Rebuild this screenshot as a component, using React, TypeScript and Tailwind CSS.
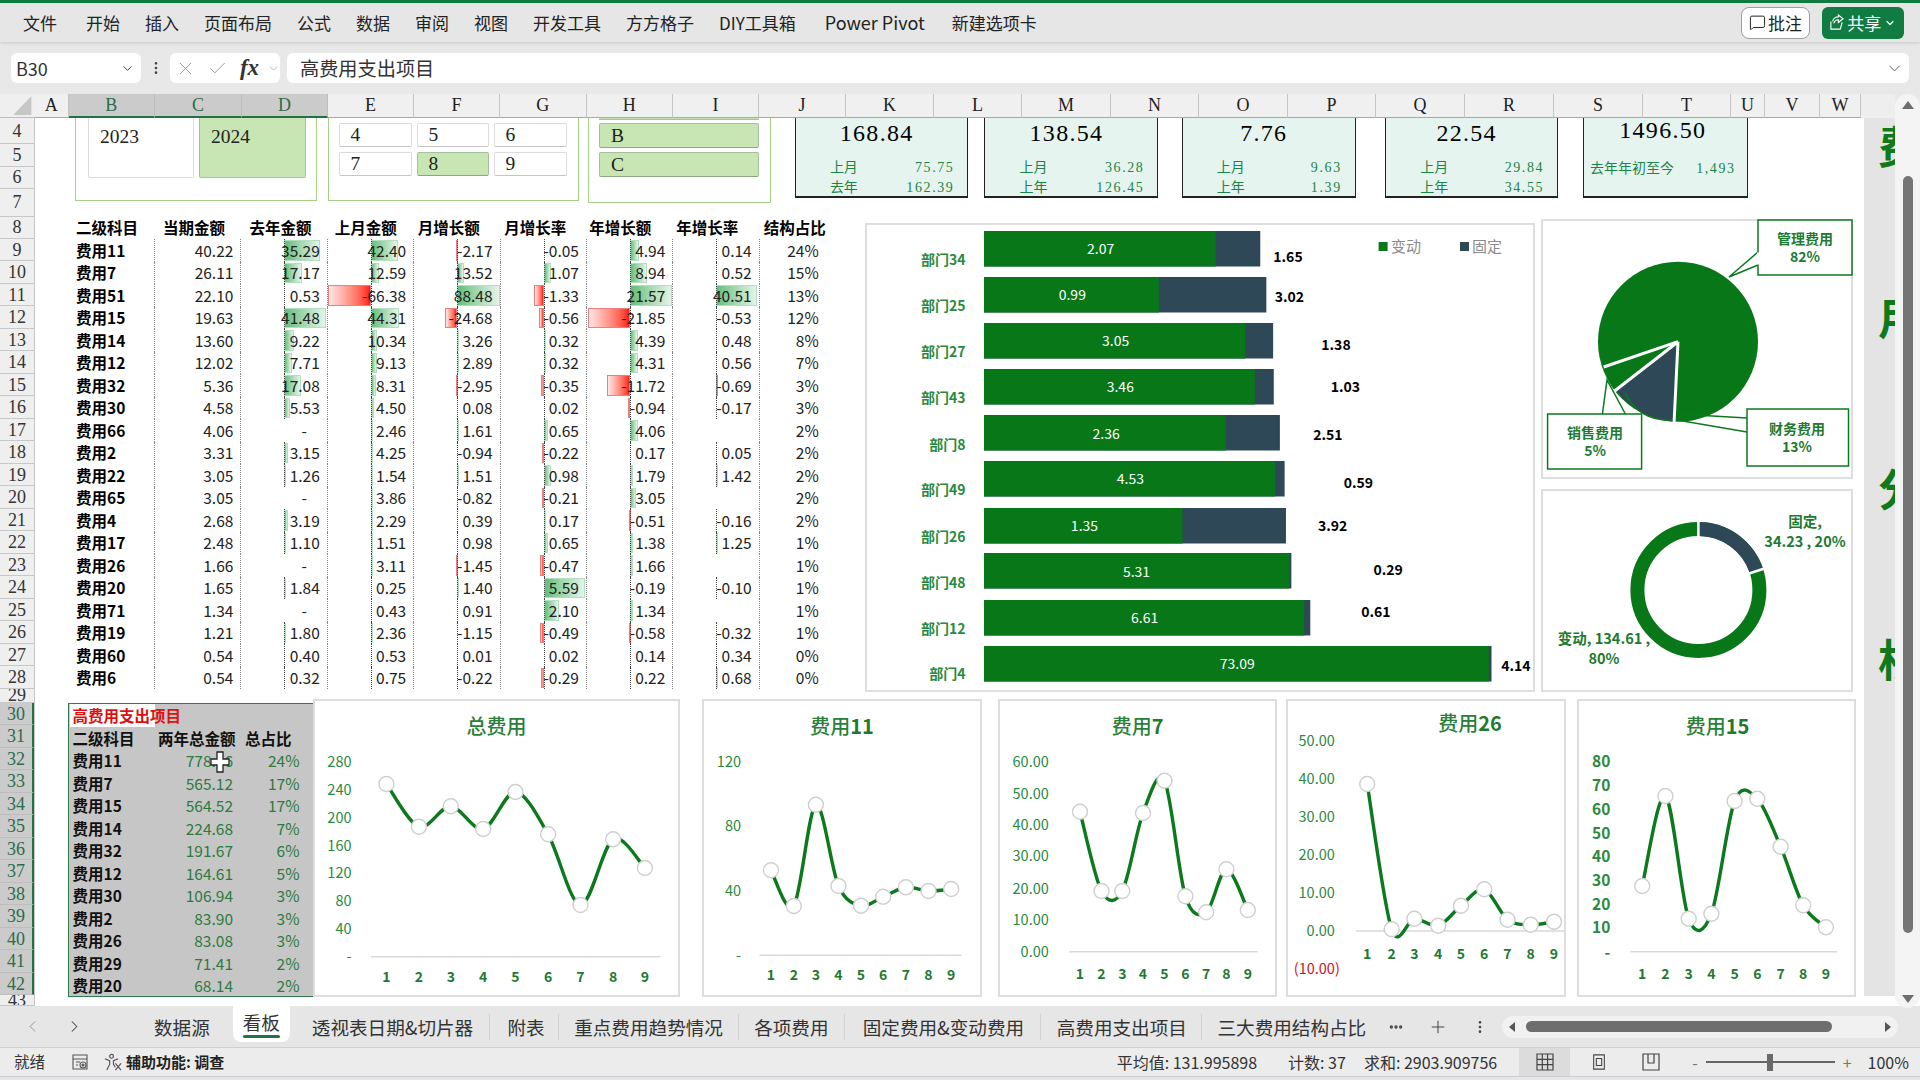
import React from "react";
import { ChevronDown, ChevronLeft, ChevronRight, X, Check, Plus, MoreVertical, MoreHorizontal, MessageSquare } from "lucide-react";

const SANS = "font-['Noto_Sans_CJK_SC','Noto_Sans',sans-serif]";
const SERIF = "font-['Liberation_Serif','Noto_Sans_CJK_SC',serif]";

const COLS: { l: string; c: string; sel?: boolean }[] = [
  { l: "A", c: "w-[33.6px]" },
  { l: "B", c: "w-[86.4px]", sel: true },
  { l: "C", c: "w-[87px]", sel: true },
  { l: "D", c: "w-[86px]", sel: true },
  { l: "E", c: "w-[86px]" },
  { l: "F", c: "w-[86px]" },
  { l: "G", c: "w-[86.6px]" },
  { l: "H", c: "w-[86.4px]" },
  { l: "I", c: "w-[86px]" },
  { l: "J", c: "w-[87px]" },
  { l: "K", c: "w-[88px]" },
  { l: "L", c: "w-[88px]" },
  { l: "M", c: "w-[89px]" },
  { l: "N", c: "w-[88px]" },
  { l: "O", c: "w-[89px]" },
  { l: "P", c: "w-[88px]" },
  { l: "Q", c: "w-[89px]" },
  { l: "R", c: "w-[89px]" },
  { l: "S", c: "w-[89px]" },
  { l: "T", c: "w-[88px]" },
  { l: "U", c: "w-[34px]" },
  { l: "V", c: "w-[55px]" },
  { l: "W", c: "w-[41px]" },
];

const ROWS: { n: string; c: string; sel?: boolean }[] = [
  { n: "4", c: "h-[26px]" },
  { n: "5", c: "h-[22.7px]" },
  { n: "6", c: "h-[22.3px]" },
  { n: "7", c: "h-[27.7px]" },
  { n: "8", c: "h-[22.3px]" },
  ...Array.from({ length: 20 }, (_, i) => ({ n: String(i + 9), c: "h-[22.5px]" })),
  { n: "29", c: "h-[14px]" },
  ...Array.from({ length: 13 }, (_, i) => ({ n: String(i + 30), c: "h-[22.5px]", sel: true })),
  { n: "43", c: "h-[10.5px]" },
];

type Row = [string, string, string, string, string, string, string, string, string];
const DATA: Row[] = [
  ["费用11", "40.22", "35.29", "42.40", "-2.17", "-0.05", "4.94", "0.14", "24%"],
  ["费用7", "26.11", "17.17", "12.59", "13.52", "1.07", "8.94", "0.52", "15%"],
  ["费用51", "22.10", "0.53", "-66.38", "88.48", "-1.33", "21.57", "40.51", "13%"],
  ["费用15", "19.63", "41.48", "44.31", "-24.68", "-0.56", "-21.85", "-0.53", "12%"],
  ["费用14", "13.60", "9.22", "10.34", "3.26", "0.32", "4.39", "0.48", "8%"],
  ["费用12", "12.02", "7.71", "9.13", "2.89", "0.32", "4.31", "0.56", "7%"],
  ["费用32", "5.36", "17.08", "8.31", "-2.95", "-0.35", "-11.72", "-0.69", "3%"],
  ["费用30", "4.58", "5.53", "4.50", "0.08", "0.02", "-0.94", "-0.17", "3%"],
  ["费用66", "4.06", "-", "2.46", "1.61", "0.65", "4.06", "", "2%"],
  ["费用2", "3.31", "3.15", "4.25", "-0.94", "-0.22", "0.17", "0.05", "2%"],
  ["费用22", "3.05", "1.26", "1.54", "1.51", "0.98", "1.79", "1.42", "2%"],
  ["费用65", "3.05", "-", "3.86", "-0.82", "-0.21", "3.05", "", "2%"],
  ["费用4", "2.68", "3.19", "2.29", "0.39", "0.17", "-0.51", "-0.16", "2%"],
  ["费用17", "2.48", "1.10", "1.51", "0.98", "0.65", "1.38", "1.25", "1%"],
  ["费用26", "1.66", "-", "3.11", "-1.45", "-0.47", "1.66", "", "1%"],
  ["费用20", "1.65", "1.84", "0.25", "1.40", "5.59", "-0.19", "-0.10", "1%"],
  ["费用71", "1.34", "-", "0.43", "0.91", "2.10", "1.34", "", "1%"],
  ["费用19", "1.21", "1.80", "2.36", "-1.15", "-0.49", "-0.58", "-0.32", "1%"],
  ["费用60", "0.54", "0.40", "0.53", "0.01", "0.02", "0.14", "0.34", "0%"],
  ["费用6", "0.54", "0.32", "0.75", "-0.22", "-0.29", "0.22", "0.68", "0%"],
];

const SCALE = [0, 0, 1.0, 0.64, 0.48, 7.4, 1.93, 1.0];

function DataCell({ v, scale }: { v: string; scale: number }) {
  const n = parseFloat(v);
  const has = !isNaN(n);
  const w = has ? Math.abs(n) * scale : 0;
  return (
    <div className="relative w-[86.4px] h-full border-r border-dotted border-[#888] flex items-center justify-end pr-[7px]">
      {has && w >= 0.6 && n > 0 && (
        <div
          className="absolute top-px bottom-px bg-linear-to-r from-[#63be7b] to-[#e4f4e9] border border-[#b3dfc0]"
          style={{ left: 43, width: w }}
        />
      )}
      {has && w >= 0.6 && n < 0 && (
        <div
          className="absolute top-px bottom-px bg-linear-to-l from-[#ff1010] to-[#ffe6e6] border border-[#e8807f]"
          style={{ left: 43 - w, width: w }}
        />
      )}
      {scale > 0 && v !== "" && v !== "-" && <div className="absolute left-[43px] top-0 bottom-0 border-l border-dotted border-[#444]" />}
      <span className={v === "-" ? "relative pr-[13px]" : "relative"}>{v}</span>
    </div>
  );
}

function MainTable() {
  const heads: [string, string][] = [
    ["二级科目", "pl-[7.5px]"],
    ["当期金额", "pl-[8px]"],
    ["去年金额", "pl-[8px]"],
    ["上月金额", "pl-[7px]"],
    ["月增长额", "pl-[3.6px]"],
    ["月增长率", "pl-[3.8px]"],
    ["年增长额", "pl-[2.4px]"],
    ["年增长率", "pl-[3px]"],
    ["结构占比", "pl-[4px]"],
  ];
  return (
    <div className="w-[777.6px] text-[15.5px] leading-none text-[#222]">
      <div className="flex h-[22px] items-center font-bold text-black">
        {heads.map(([h, c]) => (
          <div key={h} className={`w-[86.4px] whitespace-nowrap ${c}`}>{h}</div>
        ))}
      </div>
      {DATA.map((r) => (
        <div key={r[0]} className="flex h-[22.5px]">
          <div className="w-[86.4px] pl-[7.5px] font-bold text-black flex items-center border-r border-dotted border-[#888]">{r[0]}</div>
          <DataCell v={r[1]} scale={0} />
          {r.slice(2, 8).map((v, i) => (
            <DataCell key={i} v={v} scale={SCALE[i + 2]} />
          ))}
          <div className="w-[59px] flex items-center justify-end">{r[8]}</div>
        </div>
      ))}
    </div>
  );
}

function Slicers() {
  const btn = "rounded-[2px] border border-[#dcdcdc] border-b-[#c4c4c4] bg-white flex items-center pl-[11px] text-[#222]";
  const on = "rounded-[2px] border border-[#a9bda0] border-b-[#8da487] bg-[#c8e5b4] flex items-center pl-[11px] text-[#222]";
  return (
    <div className={`flex items-start ml-[40px] text-[19.5px] leading-none ${SERIF}`}>
      <div className="w-[241.6px] h-[83px] border-x border-b border-[#a5d08a] flex gap-[5px] pl-[12px]">
        <div className="w-[106px] h-[60px] rounded-b-[2px] border-x border-b border-[#dcdcdc] bg-white pl-[11px] pt-[9px] text-[#222]">2023</div>
        <div className="w-[106.6px] h-[60px] rounded-b-[2px] border-x border-b border-[#a9bda0] bg-[#c8e5b4] pl-[11px] pt-[9px] text-[#222]">2024</div>
      </div>
      <div className="ml-[11px] w-[251px] h-[83px] border-x border-b border-[#a5d08a] pl-[10px] pt-[4.7px] grid grid-cols-[73px_72px_73px] grid-rows-[24px_24px] gap-[5px]">
        <div className={btn}>4</div>
        <div className={btn}>5</div>
        <div className={btn}>6</div>
        <div className={btn}>7</div>
        <div className={on}>8</div>
        <div className={btn}>9</div>
      </div>
      <div className="ml-[9.3px] w-[183.6px] h-[85px] border-x border-b border-[#a5d08a] pl-[10px] flex flex-col">
        <div className="w-[160.5px] h-[2px] bg-[#c8e5b4] border-b border-[#a9bda0]" />
        <div className={`${on} w-[160.5px] h-[24.4px] mt-[3.3px]`}>B</div>
        <div className={`${on} w-[160.5px] h-[24.4px] mt-[4.6px]`}>C</div>
      </div>
    </div>
  );
}

function KpiCard({ cls, value, a, av, b, bv }: { cls: string; value: string; a: string; av: string; b: string; bv: string }) {
  return (
    <div className={`${cls} h-[80px] border-x border-b-2 border-[#222] bg-[#e6f4ef] ${SERIF}`}>
      <div className="h-[30px] pr-[10px] text-center text-[24px] leading-[30px] tracking-[1.3px] text-black">{value}</div>
      <div className="mt-[10px] pl-[34px] pr-[13px] text-[14px] leading-[19.7px] text-[#1b8447]">
        <div className="flex justify-between"><span>{a}</span><span className="tracking-[1.6px]">{av}</span></div>
        <div className="flex justify-between"><span>{b}</span><span className="tracking-[1.6px]">{bv}</span></div>
      </div>
    </div>
  );
}

function TopBand() {
  return (
    <div className="flex items-start h-[85px] shrink-0">
      <Slicers />
      <KpiCard cls="ml-[23.4px] w-[173.6px]" value="168.84" a="上月" av="75.75" b="去年" bv="162.39" />
      <KpiCard cls="ml-[16px] w-[174px]" value="138.54" a="上月" av="36.28" b="上年" bv="126.45" />
      <KpiCard cls="ml-[23.3px] w-[174px]" value="7.76" a="上月" av="9.63" b="上年" bv="1.39" />
      <KpiCard cls="ml-[29.4px] w-[173px]" value="22.54" a="上月" av="29.84" b="上年" bv="34.55" />
      <div className={`ml-[24.8px] w-[164.7px] h-[80px] border-x border-b-2 border-[#222] bg-[#e6f4ef] ${SERIF}`}>
        <div className="h-[24px] pr-[5px] text-center text-[24px] leading-[24px] tracking-[1.3px] text-black">1496.50</div>
        <div className="mt-[17px] pl-[6px] pr-[11px] flex justify-between text-[14px] leading-[20px] text-[#1b8447]">
          <span>去年年初至今</span><span className="tracking-[1.6px]">1,493</span>
        </div>
      </div>
    </div>
  );
}

const GREEN = "#087718";
const NAVY = "#2f4858";
const X4 = (v: number) => 860 + v / 1.479;

function BarChart() {
  const bars = [
    ["部门34", 231, 526, 592, "2.07", 356, 249, "1.65", 633, 257, 260],
    ["部门25", 277, 442, 601, "0.99", 314, 295, "3.02", 635, 297, 306],
    ["部门27", 323, 570, 611, "3.05", 378, 341, "1.38", 704, 345, 352],
    ["部门43", 369, 584, 612, "3.46", 385, 387, "1.03", 718, 387, 398],
    ["部门8", 415, 541, 621, "2.36", 364, 434, "2.51", 692, 435, 445],
    ["部门49", 461, 614, 628, "4.53", 400, 479, "0.59", 737, 483, 490],
    ["部门26", 508, 477, 630, "1.35", 332, 526, "3.92", 699, 526, 537],
    ["部门48", 553, 635, 638, "5.31", 409, 572, "0.29", 781, 570, 583],
    ["部门12", 600, 657, 666, "6.61", 421, 618, "0.61", 763, 612, 629],
    ["部门4", 646, 930, 934, "73.09", 558, 664, "4.14", 970, 666, 674],
  ] as const;
  return (
    <div className="ml-[18.8px] mt-[6px] w-[670px] h-[469px] ring-2 ring-inset ring-[#dedede] shrink-0">
      <svg viewBox="865 223 670 469" className="block w-full h-full">
        {bars.map((b) => (
          <g key={b[0]}>
            <rect x={984} y={b[1]} width={X4(b[3]) - 984} height={35.5} fill={NAVY} />
            <rect x={984} y={b[1]} width={X4(b[2]) - 984} height={35.5} fill={GREEN} />
            <text x={X4(b[5])} y={b[6]} dy="0.36em" textAnchor="middle" fontSize={14} fill="#fff">{b[4]}</text>
            <text x={X4(b[8])} y={b[9]} dy="0.36em" textAnchor="middle" fontSize={14} fontWeight={700} fill="#000">{b[7]}</text>
            <text x={965.5} y={b[10]} dy="0.36em" textAnchor="end" fontSize={14} fontWeight={700} fill="#2a8a3e">{b[0]}</text>
          </g>
        ))}
        <rect x={1378.6} y={242} width={9} height={9} fill={GREEN} />
        <text x={1391} y={246.5} dy="0.36em" fontSize={15} fill="#8a8a8a">变动</text>
        <rect x={1460} y={242} width={9} height={9} fill={NAVY} />
        <text x={1472} y={246.5} dy="0.36em" fontSize={15} fill="#8a8a8a">固定</text>
      </svg>
    </div>
  );
}

function PieChart() {
  const t = { fontSize: 14, fontWeight: 700, fill: "#1d7a30", textAnchor: "middle" as const, dy: "0.36em" };
  const G2 = "#0a7a1f";
  return (
    <div className="w-[312px] h-[260px] ring-2 ring-inset ring-[#dedede]">
      <svg viewBox="1541 219 312 260" className="block w-full h-full">
        <circle cx={1678} cy={341.7} r={80} fill={GREEN} />
        <path d="M1678 341.7 L1616 390 A79 79 0 0 0 1675 421.7 Z" fill={NAVY} />
        <path d="M1678 341.7 L1603.7 367 M1678 341.7 L1612 393 M1678 341.7 L1674 424" stroke="#fff" strokeWidth={3} fill="none" />
        <path d="M1625 393 Q1640 422 1672 420" stroke={G2} strokeWidth={1.5} fill="none" />
        <path d="M1758 252 L1729 277 L1758 265" stroke={G2} strokeWidth={1.5} fill="none" />
        <rect x={1758} y={220} width={94} height={55} fill="#fff" stroke={G2} strokeWidth={1.5} />
        <path d="M1758 252.5 L1758 264.5" stroke="#fff" strokeWidth={2} />
        <text x={1805} y={239} {...t}>管理费用</text>
        <text x={1805} y={257} {...t}>82%</text>
        <path d="M1747 418 L1678 414 M1747 432 L1677 420" stroke={G2} strokeWidth={1.5} fill="none" />
        <rect x={1747} y={409} width={101.5} height={57} fill="#fff" stroke={G2} strokeWidth={1.5} />
        <text x={1797} y={429} {...t}>财务费用</text>
        <text x={1797} y={447} {...t}>13%</text>
        <path d="M1602.4 414 L1607 380 L1625.4 414" stroke={G2} strokeWidth={1.5} fill="none" />
        <rect x={1547.6} y={414} width={94} height={55} fill="#fff" stroke={G2} strokeWidth={1.5} />
        <text x={1595} y={433} {...t}>销售费用</text>
        <text x={1595} y={451} {...t}>5%</text>
      </svg>
    </div>
  );
}

function DonutChart() {
  const t = { fontSize: 14.5, fontWeight: 700, fill: "#1d7a30", textAnchor: "middle" as const, dy: "0.36em" };
  const cx = 1698.4, cy = 590, r = 61;
  const a = (72 * Math.PI) / 180;
  const ex = cx + r * Math.sin(a), ey = cy - r * Math.cos(a);
  const sx = cx + 76 * Math.sin(a), sy = cy - 76 * Math.cos(a);
  const ix = cx + 50 * Math.sin(a), iy = cy - 50 * Math.cos(a);
  return (
    <div className="mt-[10px] w-[312px] h-[203px] ring-2 ring-inset ring-[#dedede]">
      <svg viewBox="1541 489 312 203" className="block w-full h-full">
        <circle cx={cx} cy={cy} r={r} fill="none" stroke={GREEN} strokeWidth={14} />
        <path d={`M${cx} ${cy - r} A${r} ${r} 0 0 1 ${ex} ${ey}`} fill="none" stroke={NAVY} strokeWidth={14} />
        <path d={`M${ix} ${iy} L${sx} ${sy} M${cx} ${cy - 76} L${cx} ${cy - 50}`} stroke="#fff" strokeWidth={2.5} />
        <text x={1805} y={522} {...t}>固定,</text>
        <text x={1805} y={542} {...t}>34.23 , 20%</text>
        <text x={1604} y={639} {...t}>变动, 134.61 ,</text>
        <text x={1604} y={659} {...t}>80%</text>
      </svg>
    </div>
  );
}

const SIDE: [string, string, string][] = [
  ["费用11", "778.56", "24%"],
  ["费用7", "565.12", "17%"],
  ["费用15", "564.52", "17%"],
  ["费用14", "224.68", "7%"],
  ["费用32", "191.67", "6%"],
  ["费用12", "164.61", "5%"],
  ["费用30", "106.94", "3%"],
  ["费用2", "83.90", "3%"],
  ["费用26", "83.08", "3%"],
  ["费用29", "71.41", "2%"],
  ["费用20", "68.14", "2%"],
];

function SideTable() {
  return (
    <div className="relative ml-[33px] mt-[4px] w-[244.5px] h-[294px] bg-[#c6c6c6] border border-r-0 border-[#2f7d4f] text-[15.5px] leading-none shrink-0">
      <div className="h-[23px] flex items-center">
        <div className="ml-[1px] w-[85px] h-full bg-white pl-[2.5px] flex items-center font-bold text-[#e01010] whitespace-nowrap">高费用支出项目</div>
      </div>
      <div className="h-[22.5px] flex items-center pl-[3.5px] font-bold text-[#111] whitespace-nowrap">
        <span className="w-[85.5px]">二级科目</span>
        <span className="w-[87px]">两年总金额</span>
        <span>总占比</span>
      </div>
      {SIDE.map((r) => (
        <div key={r[0]} className="h-[22.5px] flex items-center pl-[3.5px]">
          <span className="w-[62px] font-bold text-[#111]">{r[0]}</span>
          <span className="w-[98.5px] text-right text-[#2d7a3f]">{r[1]}</span>
          <span className="w-[66.5px] text-right text-[#2d7a3f]">{r[2]}</span>
        </div>
      ))}
      <svg viewBox="0 0 20 22" className="absolute left-[141px] top-[47px] w-[20px] h-[22px]">
        <path d="M7 1H13V8H19V14H13V21H7V14H1V8H7Z" fill="#fff" stroke="#222" strokeWidth={1.3} />
      </svg>
    </div>
  );
}

function smooth(p: number[][]) {
  let d = `M${p[0][0]} ${p[0][1]}`;
  for (let i = 0; i < p.length - 1; i++) {
    const p0 = p[i - 1] || p[i];
    const p1 = p[i];
    const p2 = p[i + 1];
    const p3 = p[i + 2] || p2;
    const k = 0.16;
    d += ` C${p1[0] + (p2[0] - p0[0]) * k} ${p1[1] + (p2[1] - p0[1]) * k} ${p2[0] - (p3[0] - p1[0]) * k} ${p2[1] - (p3[1] - p1[1]) * k} ${p2[0]} ${p2[1]}`;
  }
  return d;
}

type ChartProps = {
  cls: string;
  box: [number, number, number, number];
  title: string;
  num?: string;
  tx: number;
  ty: number;
  pts: number[][];
  axis: [number, number, number];
  ylabels: [string, number][];
  yr: number;
  xy: number;
  bold?: boolean;
};

function LineChart({ cls, box, title, num, tx, ty, pts, axis, ylabels, yr, xy, bold }: ChartProps) {
  return (
    <div className={`${cls} h-[298px] ring-2 ring-inset ring-[#dedede] shrink-0`}>
      <svg viewBox={box.join(" ")} className="block w-full h-full">
        <text x={tx} y={ty} dy="0.36em" textAnchor="middle" fontSize={20} fontWeight={500} fill="#2a7f3a">
          {title}
          {num && <tspan fontWeight={700} fill="#1d7a30">{num}</tspan>}
        </text>
        {ylabels.map(([t, y]) => (
          <text key={t} x={t === "(10.00)" ? yr + 5 : yr} y={y} dy="0.36em" textAnchor="end" fontSize={bold ? 15.5 : 14.5} fontWeight={bold ? 700 : 400} fill={t === "(10.00)" ? "#d0101c" : "#2a8a3e"}>{t}</text>
        ))}
        <line x1={axis[0]} x2={axis[1]} y1={axis[2]} y2={axis[2]} stroke="#d9d9d9" strokeWidth={1.6} />
        <path d={smooth(pts)} fill="none" stroke="#0b7a1c" strokeWidth={3.4} />
        {pts.map((p, i) => (
          <g key={i}>
            <circle cx={p[0]} cy={p[1]} r={7.5} fill="#fff" stroke="#cfcfcf" strokeWidth={1.4} />
            <text x={p[0]} y={xy} dy="0.36em" textAnchor="middle" fontSize={14} fontWeight={700} fill="#1d7a30">{i + 1}</text>
          </g>
        ))}
      </svg>
    </div>
  );
}

function Charts() {
  return (
    <>
      <LineChart
        cls="w-[367.5px]" box={[312.5, 699, 367.5, 298]} title="总费用" tx={496} ty={727}
        pts={[[386, 784], [418.4, 826.7], [450.3, 806.3], [482.7, 829], [515, 792], [547.6, 834.3], [580, 905], [612.6, 839.3], [644.4, 868]]}
        axis={[370.7, 660, 956.7]}
        ylabels={[["280", 762], ["240", 790], ["200", 818], ["160", 846], ["120", 873], ["80", 901], ["40", 929], ["-", 957]]}
        yr={351} xy={976.7}
      />
      <LineChart
        cls="ml-[22px] w-[280px]" box={[702, 699, 280, 298]} title="费用" num="11" tx={842} ty={727}
        pts={[[771, 870.3], [793.8, 906], [815.9, 804.7], [838.5, 886], [861, 905.7], [883.2, 896.7], [905.9, 887.3], [928.5, 891], [951.2, 889]]}
        axis={[759.5, 961.6, 955.3]}
        ylabels={[["120", 762], ["80", 826], ["40", 890.7], ["-", 956]]}
        yr={741} xy={975}
      />
      <LineChart
        cls="ml-[16px] w-[279px]" box={[998, 699, 279, 298]} title="费用" num="7" tx={1137.6} ty={727}
        pts={[[1080, 811.7], [1101.5, 891], [1122.3, 891], [1143, 813], [1164.5, 780.7], [1185.4, 896.3], [1206.2, 912.3], [1226.4, 869.3], [1247.8, 910]]}
        axis={[1069, 1257.6, 951.7]}
        ylabels={[["60.00", 761.7], ["50.00", 793.3], ["40.00", 824.3], ["30.00", 856], ["20.00", 888.3], ["10.00", 919.7], ["0.00", 951.7]]}
        yr={1048.8} xy={974}
      />
      <LineChart
        cls="ml-[9px] w-[280px]" box={[1286, 699, 280, 298]} title="费用" num="26" tx={1470} ty={724}
        pts={[[1367.2, 784], [1391.7, 929.3], [1414.4, 918.7], [1438.2, 925.7], [1461, 905.7], [1484.2, 889.3], [1507.5, 919.7], [1530.7, 924.7], [1554, 921.7]]}
        axis={[1356, 1565, 931]}
        ylabels={[["50.00", 740.7], ["40.00", 778.3], ["30.00", 816.7], ["20.00", 854.7], ["10.00", 892.7], ["0.00", 930.7], ["(10.00)", 969]]}
        yr={1334.8} xy={954}
      />
      <LineChart
        cls="ml-[11px] w-[279px]" box={[1577, 699, 279, 298]} title="费用" num="15" tx={1717.5} ty={727}
        pts={[[1642.2, 886], [1665.4, 796], [1688.7, 918.7], [1711.4, 913.7], [1734.6, 801], [1757.3, 798.7], [1780.6, 846.7], [1803.2, 905.3], [1825.9, 927.3]]}
        axis={[1630.5, 1837, 951.7]}
        ylabels={[["80", 761.7], ["70", 785.7], ["60", 809], ["50", 833.3], ["40", 856.7], ["30", 880.7], ["20", 904.3], ["10", 927.3], ["-", 952.7]]}
        yr={1610.3} xy={974} bold
      />
    </>
  );
}

function Ribbon() {
  const tabs = ["开始", "插入", "页面布局", "公式", "数据", "审阅", "视图", "开发工具", "方方格子", "DIY工具箱"];
  return (
    <div className="h-[39px] bg-[#e6e6e6] flex items-center pl-[23px] pr-[16px] text-[17px] text-[#222] shadow-[0_1px_3px_rgba(0,0,0,0.15)] relative shrink-0">
      <span className="mr-[29px]">文件</span>
      <div className="flex gap-[25px]">
        {tabs.map((t) => <span key={t}>{t}</span>)}
      </div>
      <span className="ml-[29px] mr-[27px] text-[18px]">Power Pivot</span>
      <span>新建选项卡</span>
      <div className="ml-auto flex items-center gap-[11.5px]">
        <div className="w-[69px] h-[32px] rounded-lg border border-[#9e9e9e] bg-white flex items-center justify-center gap-[2px]">
          <MessageSquare size={17} strokeWidth={1.4} />
          <span>批注</span>
        </div>
        <div className="w-[82.5px] h-[32px] rounded-md bg-[#107c41] text-white flex items-center justify-center gap-[3px]">
          <svg viewBox="0 0 16 18" className="w-[15px] h-[17px]" fill="none" stroke="#fff" strokeWidth={1.2}>
            <path d="M2 8V16H12L14 9M4 8C4 5 7 3 10 3V1L15 5L10 9V6C8 6 6 7 5 10" />
          </svg>
          <span>共享</span>
          <ChevronDown size={12} strokeWidth={2.4} />
        </div>
      </div>
    </div>
  );
}

function FormulaBar() {
  return (
    <div className="h-[52px] bg-[#e8e8e8] flex items-center pl-[11px] pr-[11px] text-[#444] shrink-0">
      <div className="w-[130px] h-[30px] rounded-md bg-white flex items-center pl-[5px] pr-[6px] justify-between text-[18px] text-[#333]">
        <span>B30</span>
        <ChevronDown size={15} strokeWidth={1.5} />
      </div>
      <div className="w-[29px] flex justify-center"><MoreVertical size={16} strokeWidth={2} /></div>
      <div className="w-[110px] h-[30px] rounded-md bg-white flex items-center pl-[5px] text-[#999]">
        <X size={21} strokeWidth={1.1} />
        <Check size={21} strokeWidth={1.1} className="ml-[11px]" />
        <span className={`ml-[12px] italic font-bold text-[23px] text-[#333] ${SERIF}`}>fx</span>
        <ChevronDown size={13} strokeWidth={1.3} className="ml-[8px]" />
      </div>
      <div className="ml-[7px] flex-1 h-[30px] rounded-md bg-white flex items-center pl-[13px] pr-[5px] justify-between text-[19.2px] text-[#333]">
        <span>高费用支出项目</span>
        <ChevronDown size={19} strokeWidth={1.2} className="text-[#555]" />
      </div>
    </div>
  );
}

function ColumnHeaders() {
  return (
    <div className={`h-[24px] bg-[#e8e8e8] flex shrink-0 ${SERIF}`}>
      <div className="w-[35px] h-full bg-[#efefef] border-b border-[#bdbdbd] relative">
        <svg viewBox="0 0 35 24" className="absolute inset-0 w-full h-full"><path d="M32 2V22H13Z" fill="#c6c6c6" /></svg>
      </div>
      {COLS.map((c) => (
        <div
          key={c.l}
          className={c.sel
            ? `${c.c} h-full bg-[#cbcbcb] border-r border-[#bdbdbd] border-b-2 border-b-[#217346] text-[#2d6b49] flex items-center justify-center text-[18px]`
            : `${c.c} h-full bg-[#f0f0f0] border-r border-[#c4c4c4] border-b border-b-[#a8a8a8] text-[#222] flex items-center justify-center text-[18px]`}
        >
          {c.l}
        </div>
      ))}
      <div className="w-[34px] h-full bg-[#eeeeee] border-b border-[#eeeeee]" />
    </div>
  );
}

function RowHeaders() {
  return (
    <div className={`w-[35px] h-[888px] bg-[#efefef] overflow-hidden shrink-0 border-r border-[#c4c4c4] text-[#333] ${SERIF}`}>
      {ROWS.map((r) => (
        <div
          key={r.n}
          className={r.sel
            ? `${r.c} flex items-center justify-center text-[18px] leading-none bg-[#cbcbcb] text-[#2d6b49] border-b border-[#bdbdbd] border-r-2 border-r-[#217346]`
            : `${r.c} flex items-center justify-center text-[18px] leading-none border-b border-[#c8c8c8] overflow-hidden`}
        >
          {r.n}
        </div>
      ))}
    </div>
  );
}

function VScroll() {
  return (
    <div className="absolute right-0 top-[94px] w-[25px] h-[914px] bg-[#f4f4f4] rounded-[13px] flex flex-col items-center pt-[7px] pb-[5px]">
      <div className="w-0 h-0 border-x-[6px] border-x-transparent border-b-[8px] border-b-[#6e6e6e]" />
      <div className="mt-[67px] w-[10px] h-[757px] rounded-full bg-[#757575]" />
      <div className="mt-auto w-0 h-0 border-x-[6px] border-x-transparent border-t-[8px] border-t-[#6e6e6e]" />
    </div>
  );
}

function SideStrip() {
  return (
    <div className="w-[31px] h-[888px] bg-white shrink-0">
      <div className="h-[878px] bg-[#e4e4e4] overflow-hidden pl-[14px] pt-[5px] flex flex-col gap-[127px] text-[44px] leading-[44px] font-bold text-[#0f7a1c]">
        <span>费</span>
        <span>用</span>
        <span>分</span>
        <span>析</span>
      </div>
    </div>
  );
}

function Sheet() {
  return (
    <div className="flex h-[888px] shrink-0 bg-white">
      <RowHeaders />
      <div className="w-[1829px] h-[888px] overflow-hidden flex flex-col shrink-0">
        <TopBand />
        <div className="flex items-start mt-[14px] h-[475px] shrink-0">
          <div className="ml-[33.6px] shrink-0"><MainTable /></div>
          <BarChart />
          <div className="ml-[6px] mt-[2px] w-[312px] shrink-0">
            <PieChart />
            <DonutChart />
          </div>
        </div>
        <div className="flex items-start mt-[7px] h-[298px] shrink-0">
          <SideTable />
          <Charts />
        </div>
      </div>
      <SideStrip />
    </div>
  );
}

function SheetTabs() {
  const tabs: [string, string][] = [
    ["透视表日期&切片器", "ml-[22px] pr-[15.4px]"],
    ["附表", "pl-[17.8px] pr-[13.7px]"],
    ["重点费用趋势情况", "pl-[14.9px] pr-[15.1px]"],
    ["各项费用", "pl-[15.1px] pr-[15.4px]"],
    ["固定费用&变动费用", "pl-[17.8px] pr-[15.8px]"],
    ["高费用支出项目", "pl-[15.8px] pr-[14.2px]"],
    ["三大费用结构占比", "pl-[15.4px] pr-[15px]"],
  ];
  return (
    <div className="h-[42px] bg-[#e6e6e6] flex items-center text-[18.6px] text-[#333] border-b border-[#cfcfcf] shrink-0">
      <ChevronLeft size={19} strokeWidth={1.1} className="ml-[23px] text-[#888]" />
      <ChevronRight size={19} strokeWidth={1.3} className="ml-[23px] text-[#444]" />
      <span className="ml-[70px] whitespace-nowrap">数据源</span>
      <div className="ml-[23px] w-[57px] h-[36px] -mt-[6px] bg-white rounded-b-lg flex flex-col items-center justify-center">
        <span className="leading-[24px]">看板</span>
        <div className="w-[37px] h-[3px] bg-[#217346] rounded-full mt-px" />
      </div>
      {tabs.map(([t, c], i) => (
        <div key={t} className={`${c} h-[26px] flex items-center whitespace-nowrap ${i < 6 ? "border-r border-[#d2d2d2]" : ""}`}>{t}</div>
      ))}
      <MoreHorizontal size={16} strokeWidth={3} className="ml-[7px] text-[#444]" />
      <Plus size={20} strokeWidth={1.2} className="ml-[24px] text-[#444]" />
      <MoreVertical size={16} strokeWidth={2} className="ml-[24px] text-[#444]" />
      <div className="ml-[14px] w-[396px] h-[22px] bg-[#f1f1f1] rounded-full flex items-center px-[7px] shrink-0">
        <div className="w-0 h-0 border-y-[5px] border-y-transparent border-r-[6px] border-r-[#555]" />
        <div className="ml-[11px] w-[306px] h-[11px] rounded-full bg-[#6e6e6e]" />
        <div className="ml-auto w-0 h-0 border-y-[5px] border-y-transparent border-l-[6px] border-l-[#555]" />
      </div>
    </div>
  );
}

function StatusBar() {
  return (
    <div className="h-[29px] bg-[#ececec] flex items-center pl-[14px] text-[16px] text-[#333] shrink-0 border-b border-[#c9ccd2]">
      <span className="text-[15.5px]">就绪</span>
      <svg viewBox="0 0 18 18" className="ml-[26px] w-[18px] h-[18px]" fill="none" stroke="#555" strokeWidth={1.1}>
        <path d="M2 2H16V16H2ZM2 6H16M5 9H9M5 12H7" />
        <circle cx={12} cy={12} r={3} />
        <circle cx={12} cy={12} r={1} fill="#555" />
      </svg>
      <svg viewBox="0 0 20 20" className="ml-[14px] w-[19px] h-[19px]" fill="none" stroke="#555" strokeWidth={1.2}>
        <circle cx={9} cy={3.5} r={2} />
        <path d="M2 6L7 8V12L4 18M16 6L11 8V12L13 15M13 11L19 18M19 11L13 18" />
      </svg>
      <span className="ml-[4px] font-bold text-[15px] text-[#222]">辅助功能: 调查</span>
      <div className="ml-auto flex items-center h-full">
        <span>平均值: 131.995898</span>
        <span className="ml-[31px]">计数: 37</span>
        <span className="ml-[18px]">求和: 2903.909756</span>
        <div className="ml-[22px] w-[51px] h-full bg-[#dcdcdc] flex items-center justify-center">
          <svg viewBox="0 0 18 18" className="w-[18px] h-[18px]" fill="none" stroke="#444" strokeWidth={1.2}><path d="M1 1H17V17H1ZM1 6.3H17M1 11.6H17M6.3 1V17M11.6 1V17" /></svg>
        </div>
        <div className="w-[57px] flex justify-center">
          <svg viewBox="0 0 18 18" className="w-[16px] h-[18px]" fill="none" stroke="#444" strokeWidth={1.2}><path d="M3 1H15V17H3ZM6 5H12V13H6Z" /></svg>
        </div>
        <div className="w-[47px] flex justify-center">
          <svg viewBox="0 0 18 18" className="w-[18px] h-[18px]" fill="none" stroke="#444" strokeWidth={1.2}><path d="M1 1H17V17H1ZM6 1V10H12V1" /></svg>
        </div>
        <span className="ml-[18px] text-[#777]">-</span>
        <div className="ml-[8px] w-[129px] h-[1.5px] bg-[#666] flex items-center justify-center">
          <div className="w-[6px] h-[17px] bg-[#6a6a6a]" />
        </div>
        <span className="ml-[8px] text-[#777]">+</span>
        <span className="ml-[16px] mr-[11px]">100%</span>
      </div>
    </div>
  );
}

export default function App() {
  return (
    <div className={`relative w-[1920px] h-[1080px] overflow-hidden bg-[#e6e6e6] flex flex-col ${SANS}`}>
      <div className="h-[3px] bg-[#107c41] shrink-0" />
      <Ribbon />
      <FormulaBar />
      <ColumnHeaders />
      <Sheet />
      <SheetTabs />
      <StatusBar />
      <VScroll />
    </div>
  );
}
